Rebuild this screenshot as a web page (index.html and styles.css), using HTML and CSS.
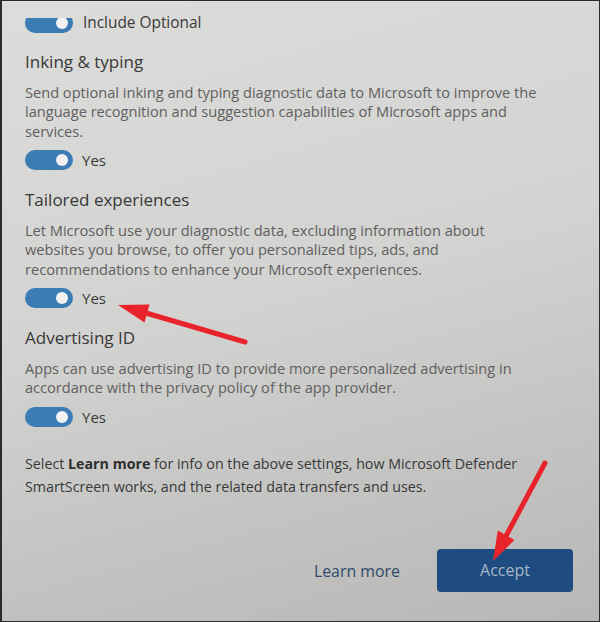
FILE: index.html
```html
<!DOCTYPE html>
<html lang="en">
<head>
<meta charset="utf-8">
<title>Privacy settings</title>
<link rel="stylesheet" href="styles.css">
</head>
<body>
<main class="screen">
  <div class="row first">
    <span class="toggle-clip"><span class="toggle"><span class="thumb"></span></span></span>
    <span class="label">Include Optional</span>
  </div>

  <section class="setting">
    <h2 class="title">Inking &amp; typing</h2>
    <p class="desc">Send optional inking and typing diagnostic data to Microsoft to improve the<br>language recognition and suggestion capabilities of Microsoft apps and<br>services.</p>
    <div class="row">
      <span class="toggle"><span class="thumb"></span></span>
      <span class="label">Yes</span>
    </div>
  </section>

  <section class="setting">
    <h2 class="title">Tailored experiences</h2>
    <p class="desc">Let Microsoft use your diagnostic data, excluding information about<br>websites you browse, to offer you personalized tips, ads, and<br>recommendations to enhance your Microsoft experiences.</p>
    <div class="row">
      <span class="toggle"><span class="thumb"></span></span>
      <span class="label">Yes</span>
    </div>
  </section>

  <section class="setting">
    <h2 class="title">Advertising ID</h2>
    <p class="desc">Apps can use advertising ID to provide more personalized advertising in<br>accordance with the privacy policy of the app provider.</p>
    <div class="row">
      <span class="toggle"><span class="thumb"></span></span>
      <span class="label">Yes</span>
    </div>
  </section>

  <p class="note">Select <b>Learn more</b> for info on the above settings, how Microsoft Defender<br>SmartScreen works, and the related data transfers and uses.</p>

  <div class="actions">
    <a class="link" href="#">Learn more</a>
    <button class="accept" type="button">Accept</button>
  </div>

  <svg class="arrows" width="600" height="622" viewBox="0 0 600 622" aria-hidden="true">
    <line x1="245" y1="342" x2="146" y2="313" stroke="#e8232b" stroke-width="5" stroke-linecap="round"/>
    <polygon points="118,305 149.5,304.5 144.5,322.5" fill="#e8232b"/>
    <line x1="545" y1="463" x2="506" y2="536" stroke="#e8232b" stroke-width="5" stroke-linecap="round"/>
    <polygon points="493,561 514.5,540 497.8,530.5" fill="#e8232b"/>
  </svg>
</main>
</body>
</html>
```

FILE: styles.css
```css
* { box-sizing: border-box; }

html, body {
  margin: 0;
  padding: 0;
}

body {
  font-family: "Open Sans", "Noto Sans", "Liberation Sans", sans-serif;
  background: #c8c8c6;
}

.screen {
  position: relative;
  width: 600px;
  height: 622px;
  overflow: hidden;
  border: 1px solid #2b2b2b;
  border-left-width: 2px;
  padding: 12px 26px 0 23px;
  background: linear-gradient(165deg, #dcdcda 0%, #d3d3d1 45%, #c3c3c1 75%, #b7b7b5 100%);
  display: flex;
  flex-direction: column;
}

.row {
  display: flex;
  align-items: center;
  height: 20px;
  gap: 9px;
}

.label {
  font-size: 15px;
  color: #3a3a3a;
  line-height: 20px;
}

.first .label {
  font-size: 15.4px;
  margin-left: 1px;
}

.toggle-clip {
  align-self: flex-end;
  height: 15px;
  overflow: hidden;
  display: flex;
  align-items: flex-end;
}

.toggle {
  width: 48px;
  height: 20px;
  border-radius: 10px;
  background: #3c7cb4;
  display: flex;
  align-items: center;
  justify-content: flex-end;
  padding-right: 5px;
  flex: none;
}

.thumb {
  width: 12px;
  height: 12px;
  border-radius: 50%;
  background: #f2f2f2;
}

.setting {
  margin-top: 17.5px;
}

.setting:first-of-type {
  margin-top: 16.5px;
}

.title {
  margin: 0;
  font-size: 17px;
  font-weight: 400;
  line-height: 24px;
  color: #383838;
}

.desc {
  margin: 9px 0 9px;
  font-size: 14.6px;
  line-height: 19.5px;
  color: #606060;
}

.note {
  margin: 25px 0 0;
  font-size: 14.25px;
  line-height: 23px;
  color: #383838;
}

.note b {
  font-weight: 700;
  color: #2e2e2e;
}

.actions {
  margin-top: 51px;
  display: flex;
  justify-content: flex-end;
  align-items: center;
  gap: 37px;
}

.link {
  font-size: 15.9px;
  color: #2f4a6b;
  text-decoration: none;
  padding-top: 2px;
}

.accept {
  width: 136px;
  height: 43px;
  border: none;
  border-radius: 4px;
  background: #1f4c80;
  color: #a8b7c6;
  font-family: inherit;
  font-size: 16px;
  padding: 0;
}

.arrows {
  position: absolute;
  left: -2px;
  top: -1px;
  pointer-events: none;
}
```
